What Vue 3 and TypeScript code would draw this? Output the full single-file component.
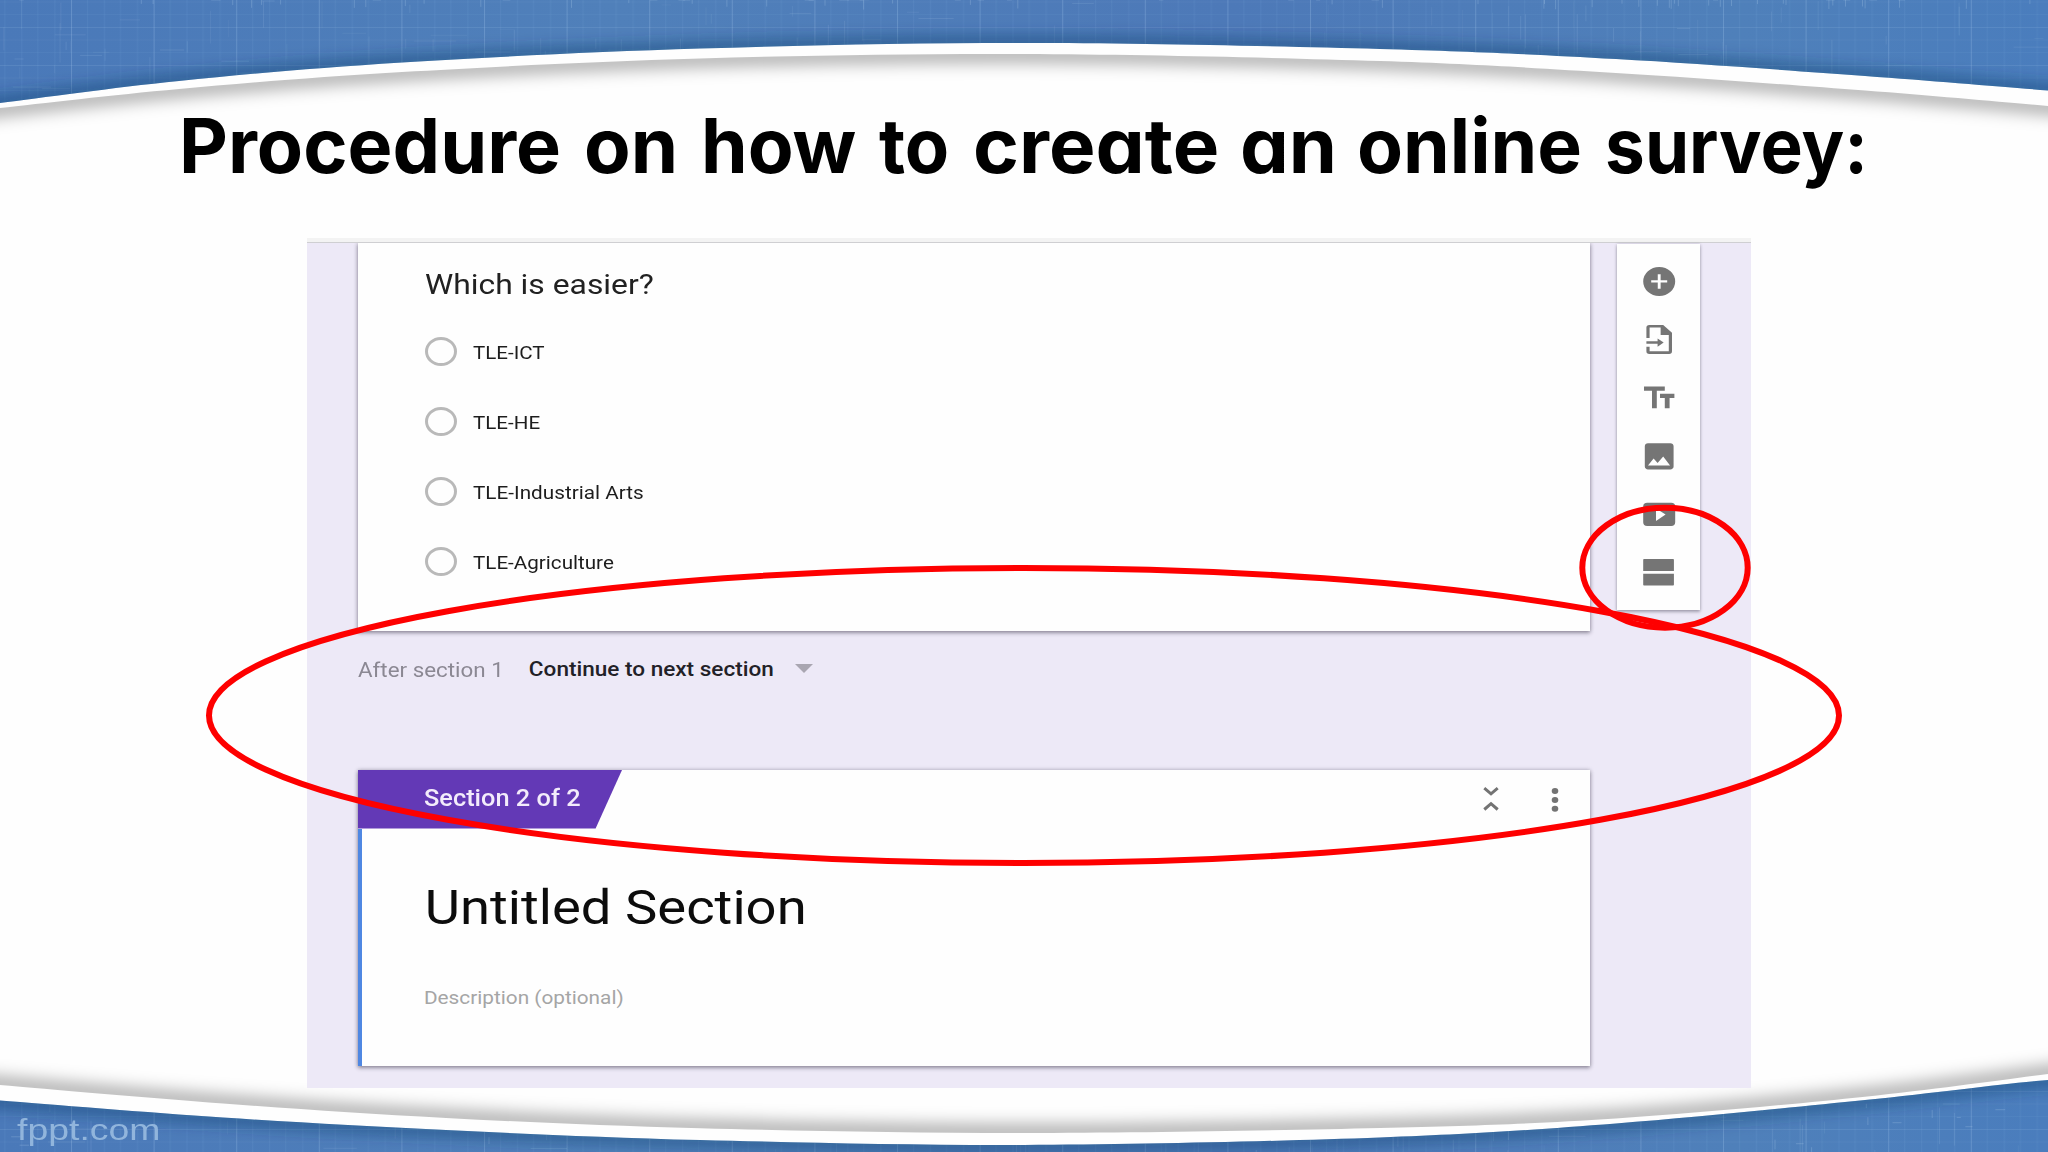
<script setup lang="ts">
import type { Directive } from 'vue'

type Point = [number, number]

interface Word {
  text: string
  width: number
  gap: number
}

// Scales a label horizontally so that its ink spans the given width.
const vFit: Directive<HTMLElement, number> = {
  mounted(el, { value }) {
    const style = getComputedStyle(el)
    const ctx = document.createElement('canvas').getContext('2d')
    if (!ctx) return
    ctx.font = `${style.fontWeight} ${style.fontSize} ${style.fontFamily}`
    const m = ctx.measureText(el.textContent ?? '')
    const ink = m.actualBoundingBoxRight + m.actualBoundingBoxLeft
    const s = value / ink
    el.style.transform = `translateX(${m.actualBoundingBoxLeft * s}px) scaleX(${s})`
  },
}

const title: Word[] = [
  { text: 'Procedure', width: 376, gap: 27 },
  { text: 'on', width: 88, gap: 31 },
  { text: 'how', width: 151, gap: 23 },
  { text: 'to', width: 68, gap: 28 },
  { text: 'create', width: 239, gap: 28 },
  { text: 'an', width: 87, gap: 30 },
  { text: 'online', width: 221, gap: 27 },
  { text: 'survey:', width: 255, gap: 0 },
]

const options = [
  { text: 'TLE-ICT', width: 71.5 },
  { text: 'TLE-HE', width: 66.5 },
  { text: 'TLE-Industrial Arts', width: 170 },
  { text: 'TLE-Agriculture', width: 141 },
]

const tools = [
  { name: 'add', d: 'M12 2a10 10 0 1 0 0 20 10 10 0 0 0 0-20zm5 10.8h-4.1V17h-1.8v-4.2H7v-1.6h4.1V7h1.8v4.2H17z' },
  { name: 'import', d: 'M5.8 2H14.5L20 7.5V20.2Q20 22 18.2 22H5.8Q4 22 4 20.2V17H6V20.2H18V9H13V3.8H6V11H4V3.8Q4 2 5.8 2ZM4 13.3H11V11.3L14.8 14.1 11 17V15H4Z' },
  { name: 'text', d: 'M2.5 3.800v3h5v12h3V6.800h5V3.800h-13zm19 5h-9v3h3v7h3v-7h3V8.800z' },
  { name: 'image', d: 'M21 19V5c0-1.1-.9-2-2-2H5c-1.1 0-2 .9-2 2v14c0 1.1.9 2 2 2h14c1.1 0 2-.9 2-2zM8.5 13.5l2.5 3 3.5-4.500 4.300 6.300H5z' },
  { name: 'video', d: 'M4.500 4H19.500Q22 4 22 6.500V17.500Q22 20 19.500 20H4.500Q2 20 2 17.500V6.500Q2 4 4.500 4ZM10 8V16.500L16 12Z' },
  { name: 'section', d: 'M2.500 2.700H20.700Q21.200 2.700 21.200 3.200V11H2V3.200Q2 2.700 2.500 2.700ZM2 13H21.200V20.600Q21.200 21.100 20.700 21.100H2.500Q2 21.100 2 20.600Z' },
]

// Smooth cubic path through a list of points.
function curve(p: Point[]): string {
  let d = `M${p[0][0]} ${p[0][1]}`
  for (let i = 0; i < p.length - 1; i++) {
    const a = p[Math.max(i - 1, 0)]
    const b = p[i]
    const c = p[i + 1]
    const e = p[Math.min(i + 2, p.length - 1)]
    d += `C${b[0] + (c[0] - a[0]) / 6} ${b[1] + (c[1] - a[1]) / 6} ${c[0] - (e[0] - b[0]) / 6} ${c[1] - (e[1] - b[1]) / 6} ${c[0]} ${c[1]}`
  }
  return d
}

const topBlue = curve([[-60, 110.500], [0, 103], [179, 81], [402, 62.5], [700, 48.500], [1024, 43], [1380, 49], [1616, 59], [1865, 76], [2048, 90.500], [2108, 95.500]])
const topWhite = curve([[-60, 114.500], [0, 108], [179, 89], [402, 72], [700, 58.500], [1024, 54], [1380, 61], [1616, 73], [1865, 90.500], [2048, 106], [2108, 111.500]])
const botWhite = curve([[-60, 1079.500], [0, 1085], [223, 1103.500], [446, 1118], [700, 1128.300], [1024, 1133], [1380, 1128], [1616, 1118.500], [1865, 1096.700], [2048, 1074], [2108, 1066]])
const botBlue = curve([[-60, 1095.500], [0, 1100.500], [223, 1117.500], [446, 1130], [700, 1140], [1024, 1145], [1380, 1137.500], [1616, 1123.500], [1865, 1100], [2036, 1081], [2108, 1079]])

// Blueprint-like scratches over the blue bands.
let seed = 7
const rnd = () => (seed = (seed * 16807) % 2147483647) / 2147483647
const scratches = Array.from({ length: 300 }, () => {
  const vertical = rnd() > 0.25
  const x = rnd() * 2048
  const bottom = rnd() > 0.75
  const edge = rnd() > 0.7
  const y = bottom ? 1100 + rnd() * 52 : edge ? 0 : rnd() * 90
  const len = edge ? 3 + rnd() * 7 : 8 + rnd() * 34
  return {
    d: vertical ? `M${x.toFixed(1)} ${y.toFixed(1)}v${len.toFixed(1)}` : `M${x.toFixed(1)} ${y.toFixed(1)}h${len.toFixed(1)}`,
    o: (edge ? 0.22 : 0.05 + rnd() * 0.09).toFixed(2),
  }
})
</script>

<template>
  <main class="slide">
    <svg class="backdrop" viewBox="0 0 2048 1152" aria-hidden="true">
      <defs>
        <linearGradient id="blue" x1="0" x2="1" y1="0" y2="0">
          <stop offset="0" stop-color="#4a79b9" />
          <stop offset="0.3" stop-color="#5080ba" />
          <stop offset="0.6" stop-color="#4d79b8" />
          <stop offset="0.85" stop-color="#4f80ba" />
          <stop offset="1" stop-color="#4a7dbd" />
        </linearGradient>
        <pattern id="grid" width="82.6" height="38" x="71" y="27" patternUnits="userSpaceOnUse">
          <path d="M.5 0V38" stroke="#a9cdf0" stroke-opacity=".26" />
          <path d="M16.500 0V38M33.500 0V38M49.500 0V38M66.500 0V38" stroke="#9cc4ea" stroke-opacity=".08" />
          <path d="M0 .5H83" stroke="#9cc4ea" stroke-opacity=".16" />
          <path d="M0 13H83M0 25.500H83" stroke="#9cc4ea" stroke-opacity=".06" />
        </pattern>
        <clipPath id="clipTop"><path :d="topBlue + 'V0H-60Z'" /></clipPath>
        <clipPath id="clipBottom"><path :d="botBlue + 'V1152H-60Z'" /></clipPath>
        <clipPath id="clipMid"><path :d="topWhite + 'V1152H-60Z'" /></clipPath>
        <clipPath id="clipMidB"><path :d="botWhite + 'V0H-60Z'" /></clipPath>
        <filter id="soft" filterUnits="userSpaceOnUse" x="-60" y="-60" width="2168" height="1272">
          <feGaussianBlur stdDeviation="8" />
        </filter>
      </defs>
      <rect width="2048" height="1152" fill="#fefefe" />
      <g clip-path="url(#clipMid)">
        <path :d="topWhite" class="shade" stroke-width="18" filter="url(#soft)" />
      </g>
      <g clip-path="url(#clipMidB)">
        <path :d="botWhite" class="shade" stroke-width="18" filter="url(#soft)" />
      </g>
      <g clip-path="url(#clipTop)">
        <rect width="2048" height="110" fill="url(#blue)" />
        <rect width="2048" height="110" fill="url(#grid)" />
        <path v-for="(s, i) in scratches" :key="i" :d="s.d" class="scratch" :stroke-opacity="s.o" />
        <path :d="topBlue" class="edge" stroke-width="9" filter="url(#soft)" />
      </g>
      <g clip-path="url(#clipBottom)">
        <rect y="1070" width="2048" height="82" fill="url(#blue)" />
        <rect y="1070" width="2048" height="82" fill="url(#grid)" />
        <path v-for="(s, i) in scratches" :key="i" :d="s.d" class="scratch" :stroke-opacity="s.o" />
        <path :d="botBlue" class="edge" stroke-width="9" filter="url(#soft)" />
      </g>
    </svg>

    <h1 class="title">
      <span v-for="w in title" :key="w.text" class="word" :style="{ width: w.width + 'px', marginRight: w.gap + 'px' }">
        <span v-fit="w.width" class="fit">{{ w.text }}</span>
      </span>
    </h1>

    <section class="panel">
      <div class="strip"></div>
      <div class="body">
        <div class="column">
          <article class="card question">
            <h2 class="prompt"><span v-fit="228.500" class="fit">Which is easier?</span></h2>
            <ul class="options">
              <li v-for="o in options" :key="o.text" class="option">
                <i class="radio"></i>
                <span v-fit="o.width" class="fit">{{ o.text }}</span>
              </li>
            </ul>
          </article>

          <div class="after">
            <span class="after-label"><span v-fit="142" class="fit">After section 1</span></span>
            <span class="after-choice"><span v-fit="242.500" class="fit">Continue to next section</span></span>
            <i class="caret"></i>
          </div>

          <article class="card section">
            <header class="section-head">
              <div class="ribbon"><span v-fit="156.500" class="fit">Section 2 of 2</span></div>
              <div class="actions">
                <svg width="16" height="24" viewBox="0 0 16 24"><path d="M1.300 1.200 8 6.800 14.700 1.200M1.300 22.500 8 16.700 14.700 22.500" fill="none" stroke="#737373" stroke-width="3" /></svg>
                <svg width="8" height="26" viewBox="0 0 8 26" fill="#737373"><ellipse cx="4" cy="4" rx="3.300" ry="3" /><ellipse cx="4" cy="12.900" rx="3.300" ry="3" /><ellipse cx="4" cy="21.800" rx="3.300" ry="3" /></svg>
              </div>
            </header>
            <div class="section-body">
              <h2 class="section-title"><span v-fit="375.500" class="fit">Untitled Section</span></h2>
              <p class="description"><span v-fit="198" class="fit">Description (optional)</span></p>
            </div>
          </article>
        </div>

        <nav class="toolbar">
          <svg v-for="t in tools" :key="t.name" class="tool" viewBox="0 0 24 24" preserveAspectRatio="none">
            <path :d="t.d" fill-rule="evenodd" />
            <path v-if="t.name === 'import'" d="M13 3V9H19Z" />
          </svg>
        </nav>
      </div>
    </section>

    <footer class="brand"><span v-fit="141.500" class="fit">fppt.com</span></footer>

    <svg class="marks" viewBox="0 0 2048 1152" aria-hidden="true">
      <ellipse cx="1024" cy="715.500" rx="815" ry="147.500" />
      <ellipse cx="1665" cy="567.700" rx="82.700" ry="60" />
    </svg>
  </main>
</template>

<style>
body {
  margin: 0;
  overflow: hidden;
}
</style>

<style scoped>
.slide {
  position: relative;
  display: flex;
  flex-direction: column;
  width: 2048px;
  height: 1152px;
  overflow: hidden;
  box-sizing: border-box;
  padding-top: 96px;
  font-family: Roboto, "Liberation Sans", sans-serif;
}
.backdrop,
.marks {
  position: absolute;
  inset: 0;
  width: 2048px;
  height: 1152px;
}
.marks {
  fill: none;
  stroke: #fe0000;
  stroke-width: 6;
}
.shade {
  fill: none;
  stroke: #000;
  stroke-opacity: 0.3;
}
.edge {
  fill: none;
  stroke: #17365f;
  stroke-opacity: 0.65;
}
.scratch {
  stroke: #c4def5;
}
.fit {
  display: inline-block;
  white-space: pre;
  transform-origin: 0 50%;
}
.title {
  position: relative;
  display: flex;
  margin: 0 0 42px 183px;
  height: 100px;
  font: 700 75.6px/100px Inter, "Open Sans", sans-serif;
  font-feature-settings: "cv11";
  color: #000;
}
.word {
  flex: none;
}
.panel {
  position: relative;
  width: 1444px;
  height: 850px;
  margin-left: 307px;
  background: #ede9f7;
}
.strip {
  height: 4px;
  background: #f3f3f3;
  border-bottom: 1px solid #cfcfd2;
}
.body {
  display: flex;
  align-items: flex-start;
  padding-left: 51px;
}
.column {
  width: 1232px;
}
.card {
  background: #fefefe;
  box-shadow: 0 2px 4px rgba(50, 45, 65, 0.42), 0 0 4px rgba(50, 45, 65, 0.3);
}
.question {
  height: 388px;
  box-sizing: border-box;
  padding: 24px 0 0 67px;
  clip-path: inset(0 -10px -10px -10px);
}
.prompt {
  margin: 0;
  height: 49.5px;
  font-size: 28px;
  line-height: 35px;
  font-weight: 400;
  color: #212121;
}
.options {
  margin: 0;
  padding: 0;
  list-style: none;
}
.option {
  display: flex;
  align-items: center;
  height: 69.9px;
  font-size: 18.6px;
  line-height: 24px;
  color: #1d1d1d;
}
.option .fit {
  padding-top: 3px;
}
.radio {
  box-sizing: border-box;
  width: 32px;
  height: 29px;
  margin-right: 15.5px;
  border: 3px solid #b9b9b9;
  border-radius: 50%;
}
.after {
  display: flex;
  align-items: center;
  box-sizing: border-box;
  height: 139px;
  padding-bottom: 64px;
}
.after-label {
  width: 172px;
  padding-top: 3px;
  font-size: 20.4px;
  color: #8b8893;
}
.after-choice {
  width: 265px;
  font-size: 20px;
  font-weight: 500;
  color: #222127;
}
.caret {
  border: 9.5px solid transparent;
  border-top: 9px solid #a9a6b1;
  border-bottom: 0;
}
.section {
  height: 295.5px;
}
.section-head {
  display: flex;
  justify-content: space-between;
  height: 58.5px;
}
.ribbon {
  box-sizing: border-box;
  width: 264px;
  height: 58.5px;
  padding-left: 66px;
  background: #6339b6;
  clip-path: polygon(0 0, 100% 0, 90% 100%, 0 100%);
  font-size: 23px;
  font-weight: 500;
  line-height: 57px;
  color: #f3ecfb;
}
.actions {
  display: flex;
  gap: 52px;
  padding: 17px 31px 0 0;
}
.section-body {
  box-sizing: border-box;
  height: 237px;
  padding: 49.5px 0 0 63px;
  border-left: 4.5px solid #4f87e2;
}
.section-title {
  margin: 0;
  font-size: 48.6px;
  line-height: 60px;
  font-weight: 400;
  color: #0c0c0c;
  padding-left: 2.5px;
}
.description {
  margin: 48px 0 0;
  font-size: 19px;
  line-height: 24px;
  color: #a5a5a5;
}
.toolbar {
  display: flex;
  flex-direction: column;
  gap: 23.5px;
  box-sizing: border-box;
  width: 83px;
  height: 366px;
  margin: 1px 0 0 27px;
  padding: 20px 0 0 22.5px;
  background: #fefefe;
  box-shadow: 0 2px 3px rgba(50, 45, 65, 0.35), 0 0 3px rgba(50, 45, 65, 0.2);
}
.tool {
  flex: none;
  width: 38.4px;
  height: 34.8px;
  fill: #757575;
}
.brand {
  position: relative;
  margin: 24px 0 0 17px;
  font: 400 29.500px/36px "Liberation Sans", Arial, sans-serif;
  color: #91b5dc;
}
</style>
